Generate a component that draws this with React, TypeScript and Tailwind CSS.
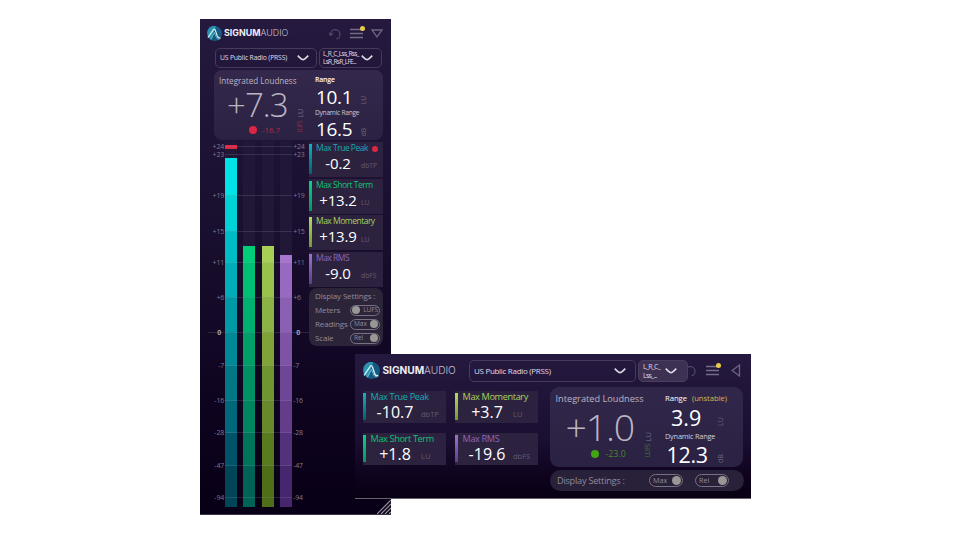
import clsx from "clsx"

type Reading = {
  label: string
  value: string
  unit: string
  color: string
  bar: string
  clipped?: boolean
}

interface Meter {
  start: number
  colors: string[]
}

// y positions of the scale ticks, relative to the top of the meters
const TICKS = [
  { label: "+24", y: 5 },
  { label: "+23", y: 13 },
  { label: "+19", y: 54 },
  { label: "+15", y: 90 },
  { label: "+11", y: 121.5 },
  { label: "+6", y: 156 },
  { label: "0", y: 191 },
  { label: "-7", y: 224.5 },
  { label: "-16", y: 259.5 },
  { label: "-28", y: 291.5 },
  { label: "-47", y: 324.5 },
  { label: "-94", y: 356.5 },
]
const METER_HEIGHT = 366

const METERS: Meter[] = [
  {
    start: 17,
    colors: ["#00e4e8", "#00e4e8", "#00e4e8", "#00d3d8", "#00bcc5", "#00adb8", "#0099a6", "#008896", "#007686", "#00687a", "#005369", "#004658"],
  },
  {
    start: 105,
    colors: ["#00cf78", "#00cf78", "#00cf78", "#00cf78", "#00cf78", "#00bf72", "#00b06e", "#009f67", "#009064", "#008560", "#00735b", "#006355"],
  },
  {
    start: 105,
    colors: ["#a5cf55", "#a5cf55", "#a5cf55", "#a5cf55", "#a5cf55", "#98c24b", "#8bb244", "#7fa339", "#6f9531", "#67892b", "#587b20", "#4e6e18"],
  },
  {
    start: 114,
    colors: ["#a676ce", "#a676ce", "#a676ce", "#a676ce", "#a676ce", "#9869c0", "#8b5fb3", "#7e53a5", "#6d4697", "#633d89", "#53317c", "#46266e"],
  },
]

const PEAK: Reading = { label: "Max True Peak", value: "-0.2", unit: "dbTP", color: "text-[#16a9b3]", bar: "from-[#10b5bd] to-[#056070]" }
const SHORT: Reading = { label: "Max Short Term", value: "+13.2", unit: "LU", color: "text-[#0fc277]", bar: "from-[#06d681] to-[#079463]" }
const MOMENTARY: Reading = { label: "Max Momentary", value: "+13.9", unit: "LU", color: "text-[#a8cf5b]", bar: "from-[#b1dc5c] to-[#759936]" }
const RMS: Reading = { label: "Max RMS", value: "-9.0", unit: "dbFS", color: "text-[#9163ba]", bar: "from-[#a072cb] to-[#603d8d]" }

const Logo = ({ large }: { large?: boolean }) => (
  <div className="flex items-center">
    <svg viewBox="0 0 32 32" className={large ? "size-[17px]" : "size-[15px]"}>
      <circle cx="16" cy="16" r="16" fill="#155a80" />
      <path d="M2 8A16 16 0 0 1 19 0L10 29A16 16 0 0 1 2 8" fill="#2b93b0" />
      <path d="M2 25 13 9c2-3 4-3 5 1l4 12c1 3 3 4 7 4" fill="none" stroke="#d2edf3" strokeWidth="2.6" />
      <path d="M8 29 16 14l3 8c2 5 4 7 8 6" fill="none" stroke="#7ac8dc" strokeWidth="1.6" />
    </svg>
    <div
      className={clsx(
        "font-[Inter,sans-serif] leading-none whitespace-nowrap text-[#f0edf5]",
        large ? "ml-[2.5px] w-[73px] text-[10.2px] tracking-[-0.05px]" : "ml-[2px] text-[8.9px]"
      )}
    >
      <span className="font-bold">SIGNUM</span>
      <span className="font-light text-[#c6c0d0]">AUDIO</span>
    </div>
  </div>
)

const UndoIcon = () => (
  <svg viewBox="0 0 12 12" className="h-3 w-3" fill="none" stroke="#554b69" strokeWidth="1.2">
    <path d="M1.7 7A4.7 4.7 0 1 1 7.5 10.9" />
    <path d="M-.2 5 1.7 7.3 4 5.4" />
  </svg>
)

const MenuIcon = () => (
  <div className="relative">
    <svg viewBox="0 0 14 11" className="h-[11px] w-[14px]" stroke="#756c86" strokeWidth="1.3">
      <path d="M0 1.5h13M0 5.5h13M0 9.5h13" />
    </svg>
    <span className="absolute -top-[2px] left-[10px] size-[4.5px] rounded-full bg-[#e6cd48]" />
  </div>
)

const Chevron = () => (
  <svg viewBox="0 0 12 6" className="h-[6px] w-3 shrink-0" fill="none" stroke="#dedae5" strokeWidth="1.7">
    <path d="M.7.7C3.5 3 4.5 4.7 6 4.7S8.5 3 11.3.7" />
  </svg>
)

const Select = ({ children, className }: { children: React.ReactNode; className?: string }) => (
  <div className={clsx("flex items-center rounded-[5px] border border-[#463b5a] text-[#e0dce6]", className)}>{children}</div>
)

const Toggle = ({ label, off, large }: { label: string; off?: boolean; large?: boolean }) => (
  <div
    className={clsx(
      "flex items-center justify-between rounded-full border border-[#787184] leading-none text-[#918b9b]",
      off ? "flex-row-reverse pr-px pl-px" : "pr-px pl-[3px]",
      large ? "h-[13px] w-[34px] text-[7.2px]" : "h-[11px] w-[30px] text-[6.6px] tracking-[-0.1px]"
    )}
  >
    <span>{label}</span>
    <span className={clsx("shrink-0 rounded-full bg-[#999696]", large ? "size-[9px]" : "size-2")} />
  </div>
)

const Vertical = ({ children, className }: { children: string; className?: string }) => (
  <span className={clsx("rotate-180 leading-none [writing-mode:vertical-rl]", className)}>{children}</span>
)

const ReadingCard = ({ reading, wide }: { reading: Reading; wide?: boolean }) => (
  <div
    className={clsx(
      "flex bg-linear-to-r from-[#2c233e] to-[#2c2240]",
      wide ? "h-8 w-[83px]" : "h-[35px] w-[74px]"
    )}
  >
    <div className={clsx("w-[3px] bg-linear-to-b", reading.bar, wide ? "mt-[2px] h-[27px]" : "mt-[2px] h-[30px]")} />
    <div className="min-w-0 grow">
      <div className={clsx("flex items-center justify-between leading-[11px]", wide ? "pl-[4.5px]" : "pl-[4px]")}>
        <span
          className={clsx("whitespace-nowrap", reading.color, wide ? "text-[9.2px] tracking-[-0.38px]" : "text-[8.5px] tracking-[-0.5px]")}
        >
          {reading.label}
        </span>
        {reading.clipped && <span className="mt-[2px] mr-[5px] size-[6px] shrink-0 rounded-full bg-[#d92745]" />}
      </div>
      <div className="flex items-center">
        <span
          className={clsx(
            "text-center font-medium text-white",
            wide ? "ml-[3px] w-[52px] text-[16px] leading-5" : "ml-[3px] w-[46px] text-[15px] leading-[21px] tracking-[-0.15px]"
          )}
        >
          {reading.value}
        </span>
        <span className={clsx("text-[#625a70]", wide ? "pt-[6px] text-[7.5px]" : "pt-[6px] text-[6.8px]")}>{reading.unit}</span>
      </div>
    </div>
  </div>
)

const MeterBar = ({ meter, peak }: { meter: Meter; peak?: boolean }) => (
  <div className="flex w-[12px] flex-col bg-[#211838]">
    <div style={{ height: meter.start }}>
      {peak && <div className="mt-[4px] h-[4px] bg-[#d92745]" />}
    </div>
    {meter.colors.map((color, i) => {
      const from = Math.max(i === 0 ? 0 : TICKS[i - 1].y, meter.start)
      const to = i === 11 ? METER_HEIGHT : TICKS[i].y
      if (to <= from) return null
      return <div key={i} style={{ height: to - from, background: color }} />
    })}
  </div>
)

const Scale = ({ right }: { right?: boolean }) => (
  <div className={clsx("flex w-[17px] shrink-0 flex-col text-[7px] leading-none text-[#81798d]", right ? "pl-px" : "items-end pr-px")}>
    {TICKS.map((tick, i) => (
      <div
        key={tick.label}
        className="flex shrink-0 flex-col justify-end"
        style={{ height: i === 0 ? 8.5 : tick.y - TICKS[i - 1].y }}
      >
        <span className={clsx("tracking-[-0.2px]", tick.label === "0" && "px-[3px] font-bold text-[#aaa4b3]")}>{tick.label}</span>
      </div>
    ))}
  </div>
)

const Meters = () => (
  <div className="relative flex h-[366px] w-[101px]">
    <Scale />
    <div className="flex gap-[6.4px]">
      {METERS.map((meter, i) => (
        <MeterBar key={i} meter={meter} peak={i === 0} />
      ))}
    </div>
    <Scale right />
    {TICKS.map((tick) => (
      <div
        key={tick.label}
        className={clsx("absolute h-px bg-[#9d95ad]/20", tick.label === "0" ? "left-0 w-[101px]" : "left-[17px] w-[67px]")}
        style={{ top: Math.floor(tick.y) }}
      />
    ))}
  </div>
)

const TallWindow = () => (
  <div className="absolute top-[19px] left-[200px] h-[496px] w-[191px] overflow-hidden border-b border-[#3c3548] bg-linear-to-b from-[#25193f] via-[#170d2b] via-50% to-[#080016]">
    <header className="flex h-[29px] items-center pl-[7px]">
      <Logo />
      <div className="ml-auto flex items-center pr-2">
        <UndoIcon />
        <div className="ml-[9px]">
          <MenuIcon />
        </div>
        <svg viewBox="0 0 12 9" className="ml-[7px] h-[9px] w-3" fill="none" stroke="#6d647f" strokeWidth="1.3">
          <path d="M1 1h10L6 7.8Z" />
        </svg>
      </div>
    </header>

    <div className="flex gap-[2px] pl-[15px]">
      <Select className="h-5 w-[102px] justify-between pr-[7px] pl-1 text-[6.8px] font-medium">
        <span className="tracking-[-0.17px] whitespace-nowrap">US Public Radio (PRSS)</span>
        <Chevron />
      </Select>
      <Select className="h-5 w-[63px] justify-between pr-[8px] pl-[3px] text-[6.6px] leading-[8px] font-medium">
        <span className="tracking-[-0.75px] whitespace-nowrap">
          L_R_C_Lss_Rss_
          <br />
          LsR_RsR_LFE...
        </span>
        <Chevron />
      </Select>
    </div>

    <section className="mt-[2px] ml-[14px] flex h-[70px] w-[169px] rounded-[8px] bg-linear-to-b from-[#34294c] to-[#2b2142]">
      <div className="w-[80px] pt-[5px] pl-[5px] text-[#bbb5c3]">
        <h2 className="text-[8.1px] leading-3 whitespace-nowrap">Integrated Loudness</h2>
        <div className="pl-[8px] text-[33px] leading-[36px] font-light tracking-[-0.9px]">+7.3</div>
        <div className="-mt-[1px] flex items-center pl-[30px] text-[#b12a46]">
          <span className="size-2 rounded-full bg-[#dc2545]" />
          <span className="ml-[5px] text-[8px] leading-[15px] tracking-[-0.1px]">-16.7</span>
        </div>
      </div>
      <div className="flex w-[21px] flex-col items-start gap-[3px] pt-[39px] pl-[3px] text-[7px]">
        <Vertical className="text-[#7b7389]">LU</Vertical>
        <Vertical className="text-[6.2px] tracking-[-0.7px] text-[#9b2944]">LUFS</Vertical>
      </div>
      <div className="w-[46px] pt-1 text-white">
        <h3 className="text-[6.8px] leading-3 font-semibold tracking-[-0.1px]">Range</h3>
        <div className="pl-px text-[19px] leading-[22px] font-medium tracking-[-0.35px]">10.1</div>
        <h3 className="text-[6.6px] leading-[10px] tracking-[-0.25px] whitespace-nowrap text-[#ccc6d3]">Dynamic Range</h3>
        <div className="pl-px text-[19px] leading-[22px] font-medium tracking-[-0.35px]">16.5</div>
      </div>
      <div className="flex flex-col gap-[24px] pt-[26px] text-[6.6px] text-[#70687e]">
        <Vertical>LU</Vertical>
        <Vertical>dB</Vertical>
      </div>
    </section>

    <div className="mt-[1px] flex pl-[8px]">
      <Meters />
      <div className="flex flex-col gap-[1.6px] pt-px">
        <ReadingCard reading={{ ...PEAK, clipped: true }} />
        <ReadingCard reading={SHORT} />
        <ReadingCard reading={MOMENTARY} />
        <ReadingCard reading={RMS} />
        <section className="flex h-[58px] w-[74px] flex-col rounded-[8px] bg-[#2c253a] pt-px pr-[3px] pl-[6px] text-[8px] tracking-[-0.15px] text-[#918a9a]">
          <h2 className="leading-[14px] whitespace-nowrap">Display Settings :</h2>
          {["Meters", "Readings", "Scale"].map((name, i) => (
            <div key={name} className="flex h-[14px] items-center justify-between">
              <span>{name}</span>
              <Toggle label={["LUFS", "Max", "Rel"][i]} off={i === 0} />
            </div>
          ))}
        </section>
      </div>
    </div>

    <svg viewBox="0 0 14 14" className="absolute right-0 bottom-0 size-[14px]" stroke="#97919e" strokeWidth="1.2">
      <path d="M0 14 14 0M4 14 14 4M8 14l6-6M12 14l2-2" />
    </svg>
  </div>
)

const WideWindow = () => (
  <div className="absolute top-[354px] left-[355px] h-[145px] w-[396px] overflow-hidden border-b border-[#666269] bg-linear-to-b from-[#25193f] via-[#1a0f31] via-60% to-[#080013]">
    <header className="flex h-[33px] items-center pl-2">
      <Logo large />
      <Select className="ml-[13.5px] h-[22px] w-[167px] justify-between pr-[9px] pl-1 text-[8px] font-medium">
        <span className="tracking-[-0.3px]">US Public Radio (PRSS)</span>
        <Chevron />
      </Select>
      <Select className="z-10 ml-[2px] h-[22px] w-[50px] justify-between border-[#493e5d] bg-[#3c3152] pr-[10px] pl-1 text-[7px] leading-[9px] font-medium">
        <span className="tracking-[-0.75px]">
          L_R_C_
          <br />
          Lss_...
        </span>
        <Chevron />
      </Select>
      <div className="-ml-[4px]">
        <UndoIcon />
      </div>
      <div className="ml-[10px]">
        <MenuIcon />
      </div>
      <svg viewBox="0 0 10 13" className="ml-[11px] h-[13px] w-[10px]" fill="none" stroke="#6d647f" strokeWidth="1.3">
        <path d="M8.5 1v11L1.2 6.5Z" />
      </svg>
    </header>

    <div className="flex pl-2">
      <div className="grid w-[187px] grid-cols-[83px_83px] content-start gap-x-[9px] gap-y-[10px] pt-1">
        <ReadingCard wide reading={{ ...PEAK, value: "-10.7" }} />
        <ReadingCard wide reading={{ ...MOMENTARY, value: "+3.7" }} />
        <ReadingCard wide reading={{ ...SHORT, value: "+1.8" }} />
        <ReadingCard wide reading={{ ...RMS, value: "-19.6" }} />
      </div>

      <div>
        <section className="flex h-[80px] w-[193px] rounded-[9px] bg-linear-to-b from-[#31274a] to-[#2b2142]">
          <div className="w-[92px] pt-[5px] pl-[5.5px] text-[#bbb5c3]">
            <h2 className="text-[9.2px] leading-[14px] whitespace-nowrap">Integrated Loudness</h2>
            <div className="pl-[10px] text-[37.5px] leading-[42px] font-light tracking-[-1.2px]">+1.0</div>
            <div className="-mt-[1px] flex items-center pl-[35px] text-[#45882b]">
              <span className="size-2 rounded-full bg-[#42a514]" />
              <span className="ml-[7px] text-[8.8px] leading-[14px]">-23.0</span>
            </div>
          </div>
          <div className="flex w-[23px] flex-col items-start gap-[3px] pt-[45px] pl-[3px] text-[7.5px]">
            <Vertical className="text-[#7b7389]">LU</Vertical>
            <Vertical className="text-[6.8px] tracking-[-0.6px] text-[#3d7430]">LUFS</Vertical>
          </div>
          <div className="w-[52px] pt-[5px] text-white">
            <h3 className="text-[7.7px] leading-3 font-medium tracking-[-0.05px] whitespace-nowrap">
              Range <span className="ml-[3px] text-[#d2b952]">(unstable)</span>
            </h3>
            <div className="pl-[6px] text-[21.5px] leading-[27px] font-medium">3.9</div>
            <h3 className="text-[7.3px] leading-[10px] tracking-[-0.18px] whitespace-nowrap text-[#d6d1dc]">Dynamic Range</h3>
            <div className="pl-[1.5px] text-[21.5px] leading-[27px] font-medium tracking-[-0.3px]">12.3</div>
          </div>
          <div className="flex flex-col gap-[28px] pt-[30px] text-[7.2px] text-[#70687e]">
            <Vertical>LU</Vertical>
            <Vertical>dB</Vertical>
          </div>
        </section>
        <section className="mt-[3px] flex h-[21px] w-[194px] items-center rounded-full bg-[#292039] pl-[7px] text-[9.2px] text-[#918a9a]">
          <h2 className="w-[92px] tracking-[-0.25px]">Display Settings :</h2>
          <Toggle large label="Max" />
          <div className="ml-3">
            <Toggle large label="Rel" />
          </div>
        </section>
      </div>
    </div>
  </div>
)

export default function App() {
  return (
    <main className="relative h-[540px] w-[960px] overflow-hidden bg-white font-['Open_Sans','Noto_Sans',sans-serif]">
      <TallWindow />
      <WideWindow />
    </main>
  )
}
